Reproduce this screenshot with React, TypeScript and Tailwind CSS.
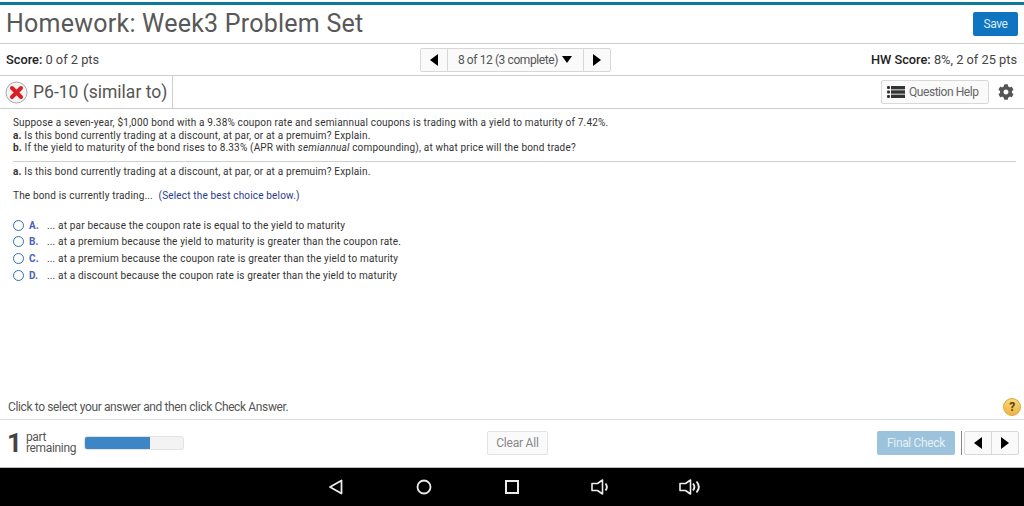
import { FaCog } from "react-icons/fa";

const choices = [
  { letter: "A.", text: "... at par because the coupon rate is equal to the yield to maturity" },
  { letter: "B.", text: "... at a premium because the yield to maturity is greater than the coupon rate." },
  { letter: "C.", text: "... at a premium because the coupon rate is greater than the yield to maturity" },
  { letter: "D.", text: "... at a discount because the coupon rate is greater than the yield to maturity" },
];

function ArrowLeft() {
  return <span className="h-0 w-0 border-y-[6px] border-r-[8px] border-y-transparent border-r-black" />;
}

function ArrowRight() {
  return <span className="h-0 w-0 border-y-[6px] border-l-[8px] border-y-transparent border-l-black" />;
}

export default function App() {
  return (
    <div className="flex h-[506px] w-[1024px] flex-col overflow-hidden bg-white font-['Roboto',sans-serif] text-[#333]">
      <div className="mt-[2px] h-[3px] shrink-0 bg-[#0d7a9c]" />

      {/* Title */}
      <header className="flex h-[38px] shrink-0 items-center justify-between pl-[6px] pr-[6px]">
        <h1 className="mb-[2px] text-[25px] leading-none tracking-[0.24px] text-[#585858]">Homework: Week3 Problem Set</h1>
        <button className="flex h-[24px] w-[45px] items-center justify-center rounded-[2px] bg-[#0f75c0] text-[12px] tracking-[-0.4px] text-[#dcecf8]">
          Save
        </button>
      </header>

      {/* Score row */}
      <div className="grid h-[33px] shrink-0 grid-cols-3 items-center border-y border-[#cfcfcf] pl-[6px] pr-[7px] text-[12.8px] text-[#444]">
        <div>
          <b className="font-medium text-[#222]">Score:</b> 0 of 2 pts
        </div>
        <div className="flex justify-center">
          <div className="ml-[7px] flex h-[24px] items-stretch rounded-[2px] border border-[#d8d8d8] bg-[#fafafa] text-[12px] tracking-[-0.4px] text-[#555]">
            <span className="flex w-[27px] items-center justify-center border-r border-[#d8d8d8]">
              <ArrowLeft />
            </span>
            <span className="flex w-[135px] items-center justify-center gap-[4px]">
              8 of 12 (3 complete)
              <span className="h-0 w-0 border-x-[5.5px] border-t-[7px] border-x-transparent border-t-black" />
            </span>
            <span className="flex w-[27px] items-center justify-center border-l border-[#d8d8d8]">
              <ArrowRight />
            </span>
          </div>
        </div>
        <div className="text-right">
          <b className="font-medium text-[#222]">HW Score:</b> 8%, 2 of 25 pts
        </div>
      </div>

      {/* Problem row */}
      <div className="flex h-[33px] shrink-0 items-center border-b border-[#cfcfcf] pl-[5px] pr-[10px]">
        <div className="flex h-[32px] items-center gap-[5px] border-r border-[#cfcfcf] pr-[5px]">
          <svg width="23" height="23" viewBox="0 0 23 23">
            <circle cx="11.5" cy="11.5" r="10.5" fill="#f4f4f4" stroke="#a9a9a9" strokeWidth="1" />
            <path d="M7 7 L16 16 M16 7 L7 16" stroke="#d81f26" strokeWidth="4" strokeLinecap="round" />
          </svg>
          <span className="text-[17.5px] text-[#555]">P6-10 (similar to)</span>
        </div>
        <button className="mb-[1px] ml-auto flex h-[24px] w-[108px] items-center gap-[4px] rounded-[2px] border border-[#d8d8d8] bg-[#fafafa] pl-[5px] text-[12px] tracking-[-0.45px] text-[#666]">
          <svg width="18" height="12" viewBox="0 0 18 12" fill="#333">
            <rect x="0" y="0" width="3" height="3" rx="1" />
            <rect x="0" y="4.5" width="3" height="3" rx="1" />
            <rect x="0" y="9" width="3" height="3" rx="1" />
            <rect x="4" y="0" width="14" height="3.4" />
            <rect x="4" y="4.3" width="14" height="3.4" />
            <rect x="4" y="8.6" width="14" height="3.4" />
          </svg>
          Question Help
        </button>
        <FaCog className="ml-[9px] h-[16px] w-[16px] text-[#555]" />
      </div>

      {/* Question */}
      <main className="min-h-0 flex-1 pl-[13px] pr-[8px] pt-[8px] text-[10px] text-[#333]">
        <div className="border-b border-[#cfcfcf] pb-[6px] leading-[12.6px] tracking-[0.17px]">
          <p>Suppose a seven-year, $1,000 bond with a 9.38% coupon rate and semiannual coupons is trading with a yield to maturity of 7.42%.</p>
          <p>
            <b className="font-bold">a.</b> Is this bond currently trading at a discount, at par, or at a premuim? Explain.
          </p>
          <p>
            <b className="font-bold">b.</b> If the yield to maturity of the bond rises to 8.33% (APR with <i>semiannual</i> compounding), at what price will the bond trade?
          </p>
        </div>
        <p className="mt-[4px] leading-[12.5px] tracking-[0.17px]">
          <b className="font-bold">a.</b> Is this bond currently trading at a discount, at par, or at a premuim? Explain.
        </p>
        <p className="mt-[12px] leading-[12.5px] tracking-[0.17px]">
          The bond is currently trading... <span className="ml-[3px] text-[#2b3a8c]">(Select the best choice below.)</span>
        </p>
        <ul className="mt-[14px] flex flex-col">
          {choices.map((choice) => (
            <li key={choice.letter} className="flex h-[16.7px] items-center tracking-[0.17px]">
              <span className="h-[11px] w-[11px] shrink-0 rounded-full border-[1.5px] border-[#2f6fb3] bg-white" />
              <b className="ml-[5px] w-[18px] shrink-0 font-bold text-[#4a63b5]">{choice.letter}</b>
              <span>{choice.text}</span>
            </li>
          ))}
        </ul>
      </main>

      {/* Instruction */}
      <div className="flex h-[25px] shrink-0 items-center justify-between border-b border-[#dcdcdc] pl-[8px] pr-[3px] text-[12px] tracking-[-0.37px] text-[#555]">
        <span>Click to select your answer and then click Check Answer.</span>
        <span className="flex h-[18px] w-[18px] items-center justify-center rounded-full border border-[#d9a93a] bg-linear-to-b from-[#f8d77a] to-[#eeb440] text-[12px] font-bold text-[#5a4310]">
          ?
        </span>
      </div>

      {/* Footer */}
      <footer className="flex h-[48px] shrink-0 items-center border-b border-[#bbb] pb-[2px] pl-[7px] pr-[5px]">
        <span className="text-[26px] font-bold leading-none text-[#444]">1</span>
        <span className="ml-[4px] w-[50px] text-[12px] leading-[11px] tracking-[-0.33px] text-[#555]">
          part
          <br />
          remaining
        </span>
        <div className="ml-[8px] h-[14px] w-[100px] overflow-hidden rounded-[3px] border border-[#e3e3e3] bg-[#f3f3f3]">
          <div className="h-full w-[66%] bg-[#3d85c6]" />
        </div>
        <button className="ml-[303px] flex h-[24px] w-[61px] items-center justify-center rounded-[2px] border border-[#e3e3e3] bg-[#fafafa] text-[12px] tracking-[-0.2px] text-[#888]">
          Clear All
        </button>
        <button className="ml-auto flex h-[24px] w-[78px] items-center justify-center rounded-[2px] bg-[#9cc2dc] text-[12px] tracking-[-0.36px] text-[#e6f0f7]">
          Final Check
        </button>
        <span className="ml-[6px] h-[24px] w-px bg-[#888]" />
        <div className="ml-[2px] flex h-[24px] items-stretch rounded-[2px] border border-[#d8d8d8] bg-[#fafafa]">
          <span className="flex w-[27px] items-center justify-center border-r border-[#d8d8d8]">
            <ArrowLeft />
          </span>
          <span className="flex w-[26px] items-center justify-center">
            <ArrowRight />
          </span>
        </div>
      </footer>

      {/* Android nav bar */}
      <nav className="flex h-[38px] shrink-0 items-center justify-center bg-black text-[#ececec]">
        <div className="ml-[3px] flex items-center gap-[70px]">
          <svg width="18" height="18" viewBox="0 0 18 18" fill="none" stroke="currentColor" strokeWidth="1.8" strokeLinejoin="round">
            <path d="M14.5 2.5 V15.5 L3 9 Z" />
          </svg>
          <svg width="18" height="18" viewBox="0 0 18 18" fill="none" stroke="currentColor" strokeWidth="1.8">
            <circle cx="9" cy="9" r="6.5" />
          </svg>
          <svg width="18" height="18" viewBox="0 0 18 18" fill="none" stroke="currentColor" strokeWidth="2">
            <rect x="3" y="3" width="12" height="12" />
          </svg>
          <svg width="18" height="18" viewBox="0 0 18 18" fill="none" stroke="currentColor" strokeWidth="1.6" strokeLinejoin="round">
            <path d="M1 5.5 H6.5 L11.5 2 V16 L6.5 12.5 H1 Z" />
            <path d="M14.5 5.5 C16.5 8 16.5 10 14.5 12.5" strokeWidth="1.9" />
          </svg>
          <svg width="22" height="18" viewBox="0 0 22 18" fill="none" stroke="currentColor" strokeWidth="1.6" strokeLinejoin="round">
            <path d="M1 5.5 H6.5 L11.5 2 V16 L6.5 12.5 H1 Z" />
            <path d="M14 5.5 C16 8 16 10 14 12.5" strokeWidth="1.9" />
            <path d="M17.5 3.5 C20.5 7 20.5 11 17.5 14.5" strokeWidth="1.9" />
          </svg>
        </div>
      </nav>
    </div>
  );
}
